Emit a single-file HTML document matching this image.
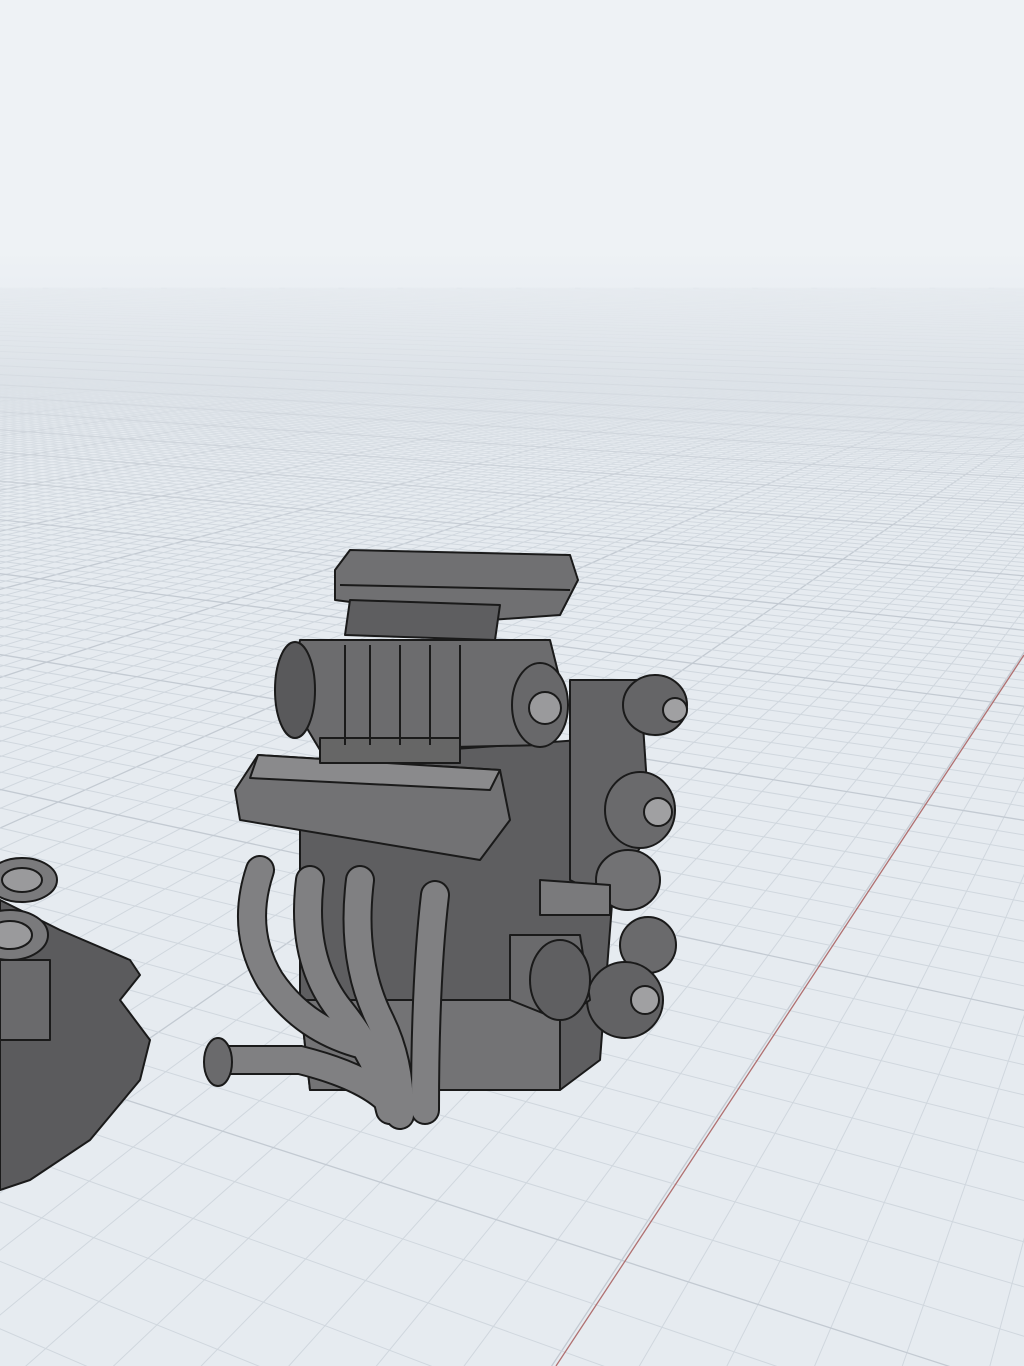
<!DOCTYPE html>
<html><head><meta charset="utf-8"><style>
html,body{margin:0;padding:0;width:1024px;height:1366px;overflow:hidden;background:#eef2f5;}
svg{position:absolute;left:0;top:0;overflow:hidden}
#fade{position:absolute;left:0;top:0;width:1024px;height:560px;background:linear-gradient(#eef2f5 0,#eef2f5 250px,rgba(236,240,244,0.85) 280px,rgba(236,240,244,0.45) 380px,rgba(236,240,244,0) 560px);}
</style></head><body>
<svg id="grid" width="1024" height="1366" viewBox="0 0 1024 1366">
<rect x="0" y="250" width="1024" height="1116" fill="#e6ebf0"/>
</svg>
<div id="fade"></div>
<svg width="1024" height="1366" viewBox="0 0 1024 1366">
<line x1="1024" y1="655" x2="556" y2="1366" stroke="#b07070" stroke-width="1.3"/>
<g stroke="#1a1a1a" stroke-width="2" fill="#6d6d6f" stroke-linejoin="round">
<path d="M0 900 L60 930 L130 960 L140 975 L120 1000 L150 1040 L140 1080 L90 1140 L30 1180 L0 1190 Z" fill="#5b5b5d"/>
<ellipse cx="22" cy="880" rx="35" ry="22" fill="#7a7a7c"/>
<ellipse cx="22" cy="880" rx="20" ry="12" fill="#9a9a9c"/>
<ellipse cx="10" cy="935" rx="38" ry="25" fill="#7a7a7c"/>
<ellipse cx="10" cy="935" rx="22" ry="14" fill="#9a9a9c"/>
<rect x="0" y="960" width="50" height="80" fill="#6a6a6c"/>
<path d="M300 760 L580 740 L620 800 L600 1060 L560 1090 L310 1090 L300 1000 Z" fill="#5e5e60"/>
<path d="M300 1000 L560 1000 L560 1090 L310 1090 Z" fill="#737375"/>
<path d="M235 790 L258 755 L500 770 L510 820 L480 860 L240 820 Z" fill="#727274"/>
<path d="M258 755 L500 770 L490 790 L250 778 Z" fill="#8a8a8c"/>
<path d="M300 640 L550 640 L565 700 L545 745 L320 750 L290 700 Z" fill="#6c6c6e"/>
<rect x="320" y="738" width="140" height="25" fill="#666"/>
<ellipse cx="295" cy="690" rx="20" ry="48" fill="#59595b"/>
<ellipse cx="540" cy="705" rx="28" ry="42" fill="#68686a"/>
<circle cx="545" cy="708" r="16" fill="#9a9a9c"/>
<line x1="345" y1="645" x2="345" y2="745"/><line x1="370" y1="645" x2="370" y2="745"/>
<line x1="400" y1="645" x2="400" y2="745"/><line x1="430" y1="645" x2="430" y2="745"/>
<line x1="460" y1="645" x2="460" y2="745"/>
<path d="M335 570 L350 550 L570 555 L578 580 L560 615 L490 620 L335 600 Z" fill="#707072"/>
<path d="M350 600 L500 605 L495 640 L345 635 Z" fill="#5e5e60"/>
<line x1="340" y1="585" x2="570" y2="590"/>
<path d="M570 680 L640 680 L650 830 L610 900 L570 880 Z" fill="#636365"/>
<ellipse cx="655" cy="705" rx="32" ry="30" fill="#656567"/>
<circle cx="675" cy="710" r="12" fill="#a0a0a2"/>
<ellipse cx="640" cy="810" rx="35" ry="38" fill="#6a6a6c"/>
<circle cx="658" cy="812" r="14" fill="#a0a0a2"/>
<ellipse cx="628" cy="880" rx="32" ry="30" fill="#727274"/>
<ellipse cx="648" cy="945" rx="28" ry="28" fill="#6a6a6c"/>
<ellipse cx="625" cy="1000" rx="38" ry="38" fill="#626264"/>
<circle cx="645" cy="1000" r="14" fill="#a0a0a2"/>
<path d="M540 880 L610 885 L610 915 L540 915 Z" fill="#7a7a7c"/>
<path d="M510 935 L580 935 L590 1000 L560 1020 L510 1000 Z" fill="#6a6a6c"/>
<ellipse cx="560" cy="980" rx="30" ry="40" fill="#5f5f61"/>
</g>
<g fill="none" stroke-linecap="round">
<g stroke="#1a1a1a" stroke-width="30">
<path d="M260 870 Q240 930 270 980 Q310 1040 390 1050"/>
<path d="M310 880 Q300 960 340 1010 Q380 1060 390 1110"/>
<path d="M360 880 Q350 960 380 1020 Q400 1060 400 1110"/>
<path d="M435 895 Q425 980 425 1110"/>
<path d="M220 1060 L300 1060 Q380 1080 400 1115"/>
</g>
<g stroke="#808082" stroke-width="26">
<path d="M260 870 Q240 930 270 980 Q310 1040 390 1050"/>
<path d="M310 880 Q300 960 340 1010 Q380 1060 390 1110"/>
<path d="M360 880 Q350 960 380 1020 Q400 1060 400 1110"/>
<path d="M435 895 Q425 980 425 1110"/>
<path d="M220 1060 L300 1060 Q380 1080 400 1115"/>
</g>
</g>
<ellipse cx="218" cy="1062" rx="14" ry="24" fill="#6a6a6c" stroke="#1a1a1a" stroke-width="2"/>
</svg>
<script>
(function(){
var svg=document.getElementById('grid');
var f=1531,th=Math.atan(1.967),c=Math.cos(th),sn=Math.sin(th),s=0.07,v0=0.59,H=250;
function P(u,v){var X=u*c-v*sn,Z=u*sn+v*c;return [512+f*X/Z,H+f/Z];}
var out='';
function seg(a,b,major){
 out+='<line x1="'+a[0].toFixed(1)+'" y1="'+a[1].toFixed(1)+'" x2="'+b[0].toFixed(1)+'" y2="'+b[1].toFixed(1)+'" stroke="'+(major?'#c3cad2':'#d0d7de')+'" stroke-width="'+(major?1.3:1)+'"/>';
}
var zn=1.35,zf=40;
for(var k=-700;k<=700;k++){
 var v=v0+k*s;
 var u1=(zn-v*c)/sn,u2=(zf-v*c)/sn;
 var a=P(u1,v),b=P(u2,v);
 if(Math.max(a[0],b[0])<-50||Math.min(a[0],b[0])>1074)continue;
 seg(a,b,k%10==0);
}
for(var k=-700;k<=700;k++){
 var u=k*s;
 var va=(zn-u*sn)/c,vb=(zf-u*sn)/c;
 var a=P(u,va),b=P(u,vb);
 if(Math.max(a[0],b[0])<-50||Math.min(a[0],b[0])>1074)continue;
 seg(a,b,k%10==0);
}
svg.insertAdjacentHTML('beforeend',out);
})();
</script>
</body></html>
